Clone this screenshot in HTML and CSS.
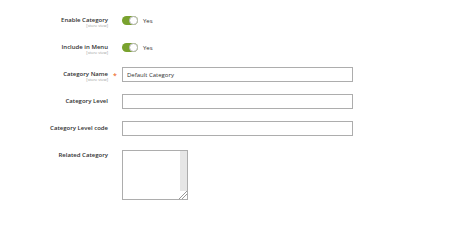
FILE: index.html
```html
<!DOCTYPE html>
<html lang="en">

<head>
  <meta charset="UTF-8">
  <title>Category</title>
  <link rel="stylesheet" href="styles.css">
</head>

<body>
  <div class="form">
    <div class="field">
      <label class="label">Enable Category<span class="scope">[store view]</span></label>
      <span class="req"></span>
      <div class="control">
        <span class="switch"></span><span class="switch-text">Yes</span>
      </div>
    </div>
    <div class="field">
      <label class="label">Include in Menu<span class="scope">[store view]</span></label>
      <span class="req"></span>
      <div class="control">
        <span class="switch"></span><span class="switch-text">Yes</span>
      </div>
    </div>
    <div class="field">
      <label class="label">Category Name<span class="scope">[store view]</span></label>
      <span class="req">*</span>
      <div class="control">
        <input class="text" value="Default Category">
      </div>
    </div>
    <div class="field">
      <label class="label">Category Level</label>
      <span class="req"></span>
      <div class="control">
        <input class="text">
      </div>
    </div>
    <div class="field">
      <label class="label">Category Level code</label>
      <span class="req"></span>
      <div class="control">
        <input class="text">
      </div>
    </div>
    <div class="field">
      <label class="label">Related Category</label>
      <span class="req"></span>
      <div class="control area-wrap">
        <textarea class="area"></textarea>
      </div>
    </div>
  </div>
</body>

</html>
```

FILE: styles.css
```css
body {
  margin: 0;
  background: #fff;
  font-family: "Open Sans", "Liberation Sans", sans-serif;
  color: #303030;
}

.form {
  padding-top: 13px;
}

.field {
  display: grid;
  grid-template-columns: 108px 14px 231px;
  align-items: start;
  margin-bottom: 12px;
}

.label {
  display: block;
  text-align: right;
  font-size: 6px;
  line-height: 7px;
  font-weight: 600;
  padding-top: 4px;
}

.scope {
  display: block;
  font-size: 4px;
  line-height: 4px;
  font-weight: 400;
  color: #999;
}

.req {
  font-size: 7px;
  line-height: 7px;
  padding-top: 5px;
  text-align: center;
  color: #eb5202;
}

.control {
  display: flex;
  align-items: center;
  height: 15px;
}

.switch {
  position: relative;
  display: inline-block;
  width: 16px;
  height: 9px;
  border-radius: 5px;
  background: #79a22e;
}

.switch::after {
  content: "";
  position: absolute;
  right: 0;
  top: 0;
  width: 7px;
  height: 7px;
  border-radius: 50%;
  background: #fff;
  border: 1px solid #b8b8b8;
}

.switch-text {
  font-size: 6px;
  margin-left: 5px;
}

.text {
  box-sizing: border-box;
  width: 231px;
  height: 15px;
  margin: 0;
  padding: 0 4px;
  border: 1px solid #adadad;
  font-family: inherit;
  font-size: 6px;
  color: #303030;
  outline: none;
}

.area-wrap {
  position: relative;
  height: auto;
  width: 66px;
  margin-top: 2px;
}

.area {
  display: block;
  box-sizing: border-box;
  width: 66px;
  height: 50px;
  margin: 0;
  padding: 0;
  border: 1px solid #adadad;
  resize: none;
  overflow: hidden;
  background: linear-gradient(to left, #e6e6e6 7px, #fff 7px);
}

/* resize grip */
.area-wrap::after {
  content: "";
  position: absolute;
  right: 1px;
  bottom: 1px;
  width: 8px;
  height: 8px;
  background:
    linear-gradient(135deg, transparent 45%, #999 45%, #999 52%, transparent 52%, transparent 68%, #999 68%, #999 75%, transparent 75%),
    linear-gradient(135deg, #fff 45%, #fff 45%);
}
```
